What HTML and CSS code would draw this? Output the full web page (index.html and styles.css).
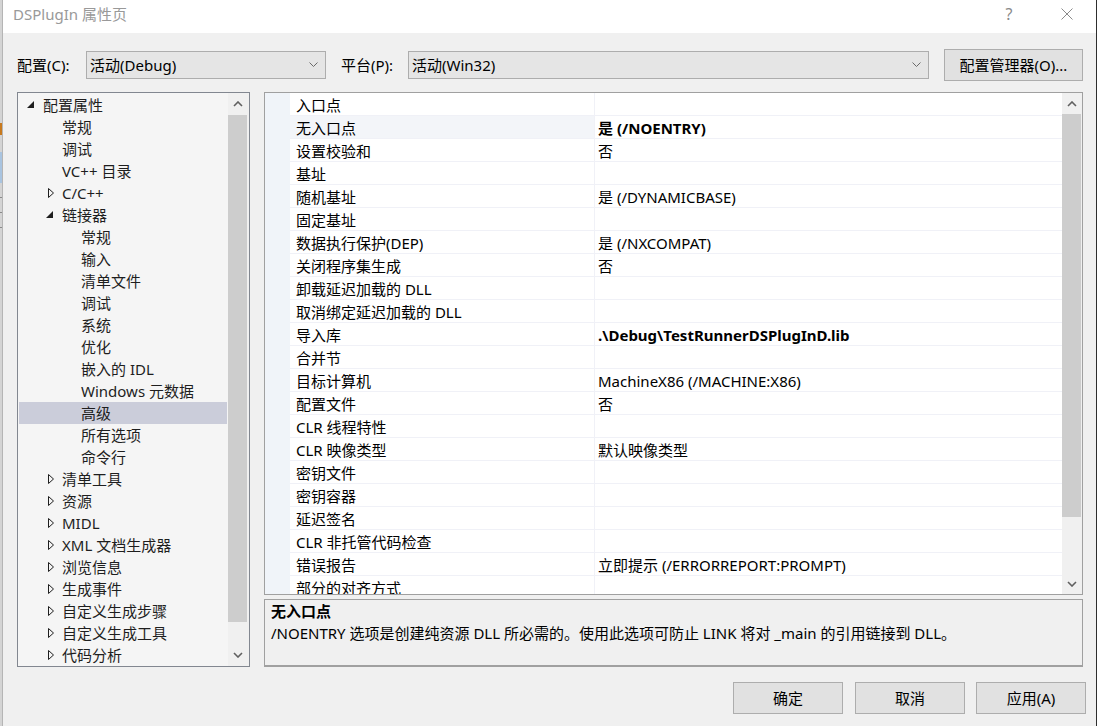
FILE: index.html
```html
<!DOCTYPE html>
<html lang="zh-CN">
<head>
    <meta charset="UTF-8">
    <title>DSPlugIn 属性页</title>
    <link rel="stylesheet" href="styles.css">
</head>
<body>
    <div class="behind">
        <div class="b-orange"></div>
        <div class="b-blue"></div>
        <div class="b-line"></div>
        <div class="b-line"></div>
        <div class="b-line"></div>
    </div>
    <div class="dialog">
        <div class="titlebar">
            <span class="title">DSPlugIn 属性页</span>
            <span class="cap-btn">?</span>
            <span class="cap-btn">
                <svg width="12" height="12" viewBox="0 0 12 12"><path d="M0.5 0.5 L11.5 11.5 M11.5 0.5 L0.5 11.5" stroke="#8a8a8a" stroke-width="1" fill="none"/></svg>
            </span>
        </div>

        <div class="toprow">
            <label class="lbl lbl-config">配置(C):</label>
            <div class="combo combo-config">
                <span>活动(Debug)</span>
                <svg width="9" height="5" viewBox="0 0 9 5"><path d="M0.5 0.5 L4.5 4.5 L8.5 0.5" stroke="#6a6a6a" fill="none"/></svg>
            </div>
            <label class="lbl lbl-platform">平台(P):</label>
            <div class="combo combo-platform">
                <span>活动(Win32)</span>
                <svg width="9" height="5" viewBox="0 0 9 5"><path d="M0.5 0.5 L4.5 4.5 L8.5 0.5" stroke="#6a6a6a" fill="none"/></svg>
            </div>
            <button class="btn btn-manager">配置管理器(O)...</button>
        </div>

        <div class="main">
            <div class="tree">
                <div class="tree-list">
                    <div class="node lv0"><span class="tg"><svg width="7" height="7" viewBox="0 0 7 7"><path d="M7 0 L7 7 L0 7 Z" fill="#1e1e1e"/></svg></span>配置属性</div>
                    <div class="node lv1"><span class="tg"></span>常规</div>
                    <div class="node lv1"><span class="tg"></span>调试</div>
                    <div class="node lv1"><span class="tg"></span>VC++ 目录</div>
                    <div class="node lv1"><span class="tg col"><svg width="6" height="10" viewBox="0 0 6 10"><path d="M0.5 0.5 L5.5 5 L0.5 9.5 Z" fill="none" stroke="#1e1e1e"/></svg></span>C/C++</div>
                    <div class="node lv1"><span class="tg"><svg width="7" height="7" viewBox="0 0 7 7"><path d="M7 0 L7 7 L0 7 Z" fill="#1e1e1e"/></svg></span>链接器</div>
                    <div class="node lv2"><span class="tg"></span>常规</div>
                    <div class="node lv2"><span class="tg"></span>输入</div>
                    <div class="node lv2"><span class="tg"></span>清单文件</div>
                    <div class="node lv2"><span class="tg"></span>调试</div>
                    <div class="node lv2"><span class="tg"></span>系统</div>
                    <div class="node lv2"><span class="tg"></span>优化</div>
                    <div class="node lv2"><span class="tg"></span>嵌入的 IDL</div>
                    <div class="node lv2"><span class="tg"></span>Windows 元数据</div>
                    <div class="node lv2 selected"><span class="tg"></span>高级</div>
                    <div class="node lv2"><span class="tg"></span>所有选项</div>
                    <div class="node lv2"><span class="tg"></span>命令行</div>
                    <div class="node lv1"><span class="tg col"><svg width="6" height="10" viewBox="0 0 6 10"><path d="M0.5 0.5 L5.5 5 L0.5 9.5 Z" fill="none" stroke="#1e1e1e"/></svg></span>清单工具</div>
                    <div class="node lv1"><span class="tg col"><svg width="6" height="10" viewBox="0 0 6 10"><path d="M0.5 0.5 L5.5 5 L0.5 9.5 Z" fill="none" stroke="#1e1e1e"/></svg></span>资源</div>
                    <div class="node lv1"><span class="tg col"><svg width="6" height="10" viewBox="0 0 6 10"><path d="M0.5 0.5 L5.5 5 L0.5 9.5 Z" fill="none" stroke="#1e1e1e"/></svg></span>MIDL</div>
                    <div class="node lv1"><span class="tg col"><svg width="6" height="10" viewBox="0 0 6 10"><path d="M0.5 0.5 L5.5 5 L0.5 9.5 Z" fill="none" stroke="#1e1e1e"/></svg></span>XML 文档生成器</div>
                    <div class="node lv1"><span class="tg col"><svg width="6" height="10" viewBox="0 0 6 10"><path d="M0.5 0.5 L5.5 5 L0.5 9.5 Z" fill="none" stroke="#1e1e1e"/></svg></span>浏览信息</div>
                    <div class="node lv1"><span class="tg col"><svg width="6" height="10" viewBox="0 0 6 10"><path d="M0.5 0.5 L5.5 5 L0.5 9.5 Z" fill="none" stroke="#1e1e1e"/></svg></span>生成事件</div>
                    <div class="node lv1"><span class="tg col"><svg width="6" height="10" viewBox="0 0 6 10"><path d="M0.5 0.5 L5.5 5 L0.5 9.5 Z" fill="none" stroke="#1e1e1e"/></svg></span>自定义生成步骤</div>
                    <div class="node lv1"><span class="tg col"><svg width="6" height="10" viewBox="0 0 6 10"><path d="M0.5 0.5 L5.5 5 L0.5 9.5 Z" fill="none" stroke="#1e1e1e"/></svg></span>自定义生成工具</div>
                    <div class="node lv1"><span class="tg col"><svg width="6" height="10" viewBox="0 0 6 10"><path d="M0.5 0.5 L5.5 5 L0.5 9.5 Z" fill="none" stroke="#1e1e1e"/></svg></span>代码分析</div>
                </div>
                <div class="vscroll tree-scroll">
                    <div class="arrow"><svg width="10" height="6" viewBox="0 0 10 6"><path d="M1 5 L5 1 L9 5" stroke="#606060" stroke-width="1.6" fill="none"/></svg></div>
                    <div class="thumb"></div>
                    <div class="track"></div>
                    <div class="arrow"><svg width="10" height="6" viewBox="0 0 10 6"><path d="M1 1 L5 5 L9 1" stroke="#606060" stroke-width="1.6" fill="none"/></svg></div>
                </div>
            </div>

            <div class="right">
                <div class="grid">
                    <div class="rows">
                        <div class="row"><span class="gutter"></span><span class="name">入口点</span><span class="value"></span></div>
                        <div class="row current"><span class="gutter"></span><span class="name">无入口点</span><span class="value bold">是 (/NOENTRY)</span></div>
                        <div class="row"><span class="gutter"></span><span class="name">设置校验和</span><span class="value">否</span></div>
                        <div class="row"><span class="gutter"></span><span class="name">基址</span><span class="value"></span></div>
                        <div class="row"><span class="gutter"></span><span class="name">随机基址</span><span class="value">是 (/DYNAMICBASE)</span></div>
                        <div class="row"><span class="gutter"></span><span class="name">固定基址</span><span class="value"></span></div>
                        <div class="row"><span class="gutter"></span><span class="name">数据执行保护(DEP)</span><span class="value">是 (/NXCOMPAT)</span></div>
                        <div class="row"><span class="gutter"></span><span class="name">关闭程序集生成</span><span class="value">否</span></div>
                        <div class="row"><span class="gutter"></span><span class="name">卸载延迟加载的 DLL</span><span class="value"></span></div>
                        <div class="row"><span class="gutter"></span><span class="name">取消绑定延迟加载的 DLL</span><span class="value"></span></div>
                        <div class="row"><span class="gutter"></span><span class="name">导入库</span><span class="value bold">.\Debug\TestRunnerDSPlugInD.lib</span></div>
                        <div class="row"><span class="gutter"></span><span class="name">合并节</span><span class="value"></span></div>
                        <div class="row"><span class="gutter"></span><span class="name">目标计算机</span><span class="value">MachineX86 (/MACHINE:X86)</span></div>
                        <div class="row"><span class="gutter"></span><span class="name">配置文件</span><span class="value">否</span></div>
                        <div class="row"><span class="gutter"></span><span class="name">CLR 线程特性</span><span class="value"></span></div>
                        <div class="row"><span class="gutter"></span><span class="name">CLR 映像类型</span><span class="value">默认映像类型</span></div>
                        <div class="row"><span class="gutter"></span><span class="name">密钥文件</span><span class="value"></span></div>
                        <div class="row"><span class="gutter"></span><span class="name">密钥容器</span><span class="value"></span></div>
                        <div class="row"><span class="gutter"></span><span class="name">延迟签名</span><span class="value"></span></div>
                        <div class="row"><span class="gutter"></span><span class="name">CLR 非托管代码检查</span><span class="value"></span></div>
                        <div class="row"><span class="gutter"></span><span class="name">错误报告</span><span class="value">立即提示 (/ERRORREPORT:PROMPT)</span></div>
                        <div class="row"><span class="gutter"></span><span class="name">部分的对齐方式</span><span class="value"></span></div>
                    </div>
                    <div class="vscroll grid-scroll">
                        <div class="arrow"><svg width="10" height="6" viewBox="0 0 10 6"><path d="M1 5 L5 1 L9 5" stroke="#606060" stroke-width="1.6" fill="none"/></svg></div>
                        <div class="thumb"></div>
                        <div class="track"></div>
                        <div class="arrow"><svg width="10" height="6" viewBox="0 0 10 6"><path d="M1 1 L5 5 L9 1" stroke="#606060" stroke-width="1.6" fill="none"/></svg></div>
                    </div>
                </div>
                <div class="desc">
                    <p class="desc-title">无入口点</p>
                    <p class="desc-text">/NOENTRY 选项是创建纯资源 DLL 所必需的。使用此选项可防止 LINK 将对 _main 的引用链接到 DLL。</p>
                </div>
            </div>
        </div>

        <div class="footer">
            <button class="btn btn-ok">确定</button>
            <button class="btn">取消</button>
            <button class="btn">应用(A)</button>
        </div>
    </div>
</body>
</html>
```

FILE: styles.css
```css
*, ::before, ::after {
    margin: 0;
    padding: 0;
    box-sizing: border-box;
}

body {
    width: 1097px;
    height: 726px;
    overflow: hidden;
    display: flex;
    background-color: #f0f0f0;
    font-family: "Noto Sans", "Noto Sans CJK SC", sans-serif;
    font-size: 15px;
    color: #000;
}

/* window peeking out on the left */
.behind {
    width: 2px;
    background-color: #d4d4d4;
    display: flex;
    flex-direction: column;
}

.b-orange {
    margin-top: 123px;
    height: 12px;
    background-color: #c87a1e;
}

.b-blue {
    margin-top: 17px;
    height: 31px;
    background-color: #a9c4e0;
}

.b-line {
    margin-top: 14px;
    height: 1px;
    background-color: #8a8a8a;
}

.dialog {
    width: 1095px;
    height: 726px;
    border-left: 1px solid #b5b5b5;
    border-right: 1px solid #2e2e2e;
    display: flex;
    flex-direction: column;
}

.titlebar {
    height: 33px;
    background-color: #fff;
    display: flex;
    align-items: flex-start;
    padding-left: 10px;
}

.title {
    flex: 1;
    color: #999;
    font-size: 15px;
    line-height: 20px;
    padding-top: 4px;
}

.cap-btn {
    width: 58px;
    height: 28px;
    display: flex;
    align-items: center;
    justify-content: center;
    color: #8a8a8a;
    font-size: 16px;
}

.toprow {
    display: flex;
    align-items: center;
    height: 32px;
    margin-top: 16px;
    padding-left: 14px;
}

.lbl {
    line-height: 20px;
    padding-bottom: 1px;
}

.lbl-config {
    width: 69px;
}

.lbl-platform {
    width: 67px;
    margin-left: 15px;
}

.combo {
    height: 28px;
    background-color: #e5e5e5;
    border: 1px solid #adadad;
    display: flex;
    align-items: center;
    justify-content: space-between;
    padding: 0 7px 1px 3px;
}

.combo-config {
    width: 240px;
}

.combo-platform {
    width: 521px;
}

.btn {
    height: 32px;
    width: 110px;
    background-color: #e1e1e1;
    border: 1px solid #adadad;
    font-family: inherit;
    font-size: 15px;
    color: #000;
    padding-bottom: 1px;
}

.btn-manager {
    width: 139px;
    margin-left: 15px;
}

.main {
    display: flex;
    margin-top: 11px;
    padding-left: 14px;
    gap: 14px;
}

.tree {
    width: 233px;
    height: 575px;
    border: 1px solid #828790;
    background-color: #f5f5f5;
    display: flex;
}

.tree-list {
    flex: 1;
    padding: 1px;
    overflow: hidden;
}

.node {
    height: 22px;
    line-height: 22px;
    display: flex;
    align-items: center;
    white-space: nowrap;
    color: #1e1e1e;
}

.node.selected {
    background-color: #cbcdda;
}

.lv0 { padding-left: 5px; }
.lv1 { padding-left: 24px; }
.lv2 { padding-left: 43px; }

.tg {
    width: 19px;
    height: 22px;
    display: flex;
    align-items: center;
    padding-left: 3px;
    padding-bottom: 2px;
}

.tg.col {
    padding-left: 5px;
    padding-bottom: 0;
}

.vscroll {
    background-color: #f0f0f0;
    display: flex;
    flex-direction: column;
}

.vscroll .arrow {
    display: flex;
    align-items: center;
    justify-content: center;
}

.vscroll .thumb {
    background-color: #cdcdcd;
}

.vscroll .track {
    flex: 1;
}

.tree-scroll {
    width: 21px;
}

.tree-scroll .arrow {
    height: 22px;
    padding-right: 1px;
}

.tree-scroll .thumb {
    height: 507px;
    margin-right: 2px;
}

.right {
    width: 819px;
    display: flex;
    flex-direction: column;
}

.grid {
    height: 503px;
    border: 1px solid #a0a0a0;
    background-color: #fff;
    display: flex;
}

.rows {
    flex: 1;
    overflow: hidden;
}

.row {
    display: flex;
    height: 23px;
    white-space: nowrap;
}

.gutter {
    width: 25px;
    background-color: #f0f4f9;
}

.name, .value {
    padding-top: 2px;
    line-height: 20px;
    border-bottom: 1px solid #f0f1f7;
}

.name {
    width: 305px;
    padding-left: 6px;
    border-right: 1px solid #f0f1f7;
}

.value {
    flex: 1;
    padding-left: 3px;
}

.row.current .name {
    background-color: #f3f5f9;
}

.bold {
    font-weight: bold;
}

.grid-scroll {
    width: 20px;
}

.grid-scroll .arrow {
    height: 21px;
}

.grid-scroll .thumb {
    height: 403px;
    margin-right: 1px;
}

.desc {
    height: 68px;
    margin-top: 4px;
    border: 1px solid #a0a0a0;
    border-bottom-width: 2px;
    background-color: #f0f0f0;
    padding: 0 6px;
}

.desc-title {
    font-weight: bold;
    line-height: 22px;
}

.desc-text {
    line-height: 23px;
}

.footer {
    display: flex;
    justify-content: flex-end;
    gap: 11px;
    margin-top: 15px;
    padding-right: 10px;
}

.btn-ok {
    margin-right: 1px;
}
```
